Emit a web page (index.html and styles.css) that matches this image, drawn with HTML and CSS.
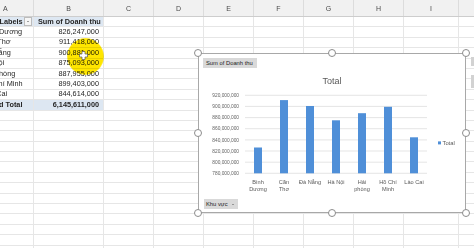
FILE: index.html
```html
<!DOCTYPE html>
<html lang="vi">
<head>
    <meta charset="UTF-8">
    <meta name="viewport" content="width=device-width, initial-scale=1.0">
    <title>Doanh thu theo khu vực - PivotChart</title>
    <link rel="stylesheet" href="styles.css">
</head>
<body>
    <div class="sheet">
        <table class="grid">
            <colgroup>
                <col class="col-a"><col class="col-b"><col class="col-n"><col class="col-n"><col class="col-n">
                <col class="col-n"><col class="col-n"><col class="col-n"><col class="col-i"><col class="col-j">
            </colgroup>
            <thead>
                <tr><th>A</th><th>B</th><th>C</th><th>D</th><th>E</th><th>F</th><th>G</th><th>H</th><th>I</th><th></th></tr>
            </thead>
            <tbody>
                <tr class="pv">
                    <td class="a"><div class="lbl">Row Labels<span class="filter"></span></div></td>
                    <td class="b num">Sum of Doanh thu</td>
                    <td></td><td></td><td></td><td></td><td></td><td></td><td></td><td></td>
                </tr>
                <tr><td class="a">Bình Dương</td><td class="b num">826,247,000</td><td></td><td></td><td></td><td></td><td></td><td></td><td></td><td></td></tr>
                <tr><td class="a">Cần Thơ</td><td class="b num">911,418,000</td><td></td><td></td><td></td><td></td><td></td><td></td><td></td><td></td></tr>
                <tr><td class="a">Đà Nẵng</td><td class="b num">900,881,000</td><td></td><td></td><td></td><td></td><td></td><td></td><td></td><td></td></tr>
                <tr><td class="a">Hà Nội</td><td class="b num">875,093,000</td><td></td><td></td><td></td><td></td><td></td><td></td><td></td><td></td></tr>
                <tr><td class="a">Hải phòng</td><td class="b num">887,955,000</td><td></td><td></td><td></td><td></td><td></td><td></td><td></td><td></td></tr>
                <tr><td class="a">Hồ Chí Minh</td><td class="b num">899,403,000</td><td></td><td></td><td></td><td></td><td></td><td></td><td></td><td></td></tr>
                <tr><td class="a">Lào Cai</td><td class="b num">844,614,000</td><td></td><td></td><td></td><td></td><td></td><td></td><td></td><td></td></tr>
                <tr class="pv"><td class="a">Grand Total</td><td class="b num">6,145,611,000</td><td></td><td></td><td></td><td></td><td></td><td></td><td></td><td></td></tr>
                <tr><td></td><td></td><td></td><td></td><td></td><td></td><td></td><td></td><td></td><td></td></tr>
                <tr><td></td><td></td><td></td><td></td><td></td><td></td><td></td><td></td><td></td><td></td></tr>
                <tr><td></td><td></td><td></td><td></td><td></td><td></td><td></td><td></td><td></td><td></td></tr>
                <tr><td></td><td></td><td></td><td></td><td></td><td></td><td></td><td></td><td></td><td></td></tr>
                <tr><td></td><td></td><td></td><td></td><td></td><td></td><td></td><td></td><td></td><td></td></tr>
                <tr><td></td><td></td><td></td><td></td><td></td><td></td><td></td><td></td><td></td><td></td></tr>
                <tr><td></td><td></td><td></td><td></td><td></td><td></td><td></td><td></td><td></td><td></td></tr>
                <tr><td></td><td></td><td></td><td></td><td></td><td></td><td></td><td></td><td></td><td></td></tr>
                <tr><td></td><td></td><td></td><td></td><td></td><td></td><td></td><td></td><td></td><td></td></tr>
                <tr><td></td><td></td><td></td><td></td><td></td><td></td><td></td><td></td><td></td><td></td></tr>
                <tr><td></td><td></td><td></td><td></td><td></td><td></td><td></td><td></td><td></td><td></td></tr>
                <tr><td></td><td></td><td></td><td></td><td></td><td></td><td></td><td></td><td></td><td></td></tr>
                <tr><td></td><td></td><td></td><td></td><td></td><td></td><td></td><td></td><td></td><td></td></tr>
                <tr><td></td><td></td><td></td><td></td><td></td><td></td><td></td><td></td><td></td><td></td></tr>
            </tbody>
        </table>
    </div>

    <!-- cursor highlight over the pivot values -->
    <div class="spotlight"></div>
    <svg class="cursor" width="9" height="9" viewBox="0 0 9 9">
        <path d="M3 0.5h3v2.5h2.5v3h-2.5v2.5h-3v-2.5h-2.5v-3h2.5z" fill="#fff" stroke="#555" stroke-width="0.7"/>
    </svg>

    <!-- floating pivot chart -->
    <div class="chart">
        <svg class="plot" width="268" height="160" viewBox="0 0 268 160">
            <text class="title" x="134" y="31" text-anchor="middle">Total</text>
            <g class="gridlines">
                <line x1="47" x2="229" y1="42.3" y2="42.3"/>
                <line x1="47" x2="229" y1="53.4" y2="53.4"/>
                <line x1="47" x2="229" y1="64.6" y2="64.6"/>
                <line x1="47" x2="229" y1="75.7" y2="75.7"/>
                <line x1="47" x2="229" y1="86.9" y2="86.9"/>
                <line x1="47" x2="229" y1="98.0" y2="98.0"/>
                <line x1="47" x2="229" y1="109.2" y2="109.2"/>
                <line x1="47" x2="229" y1="120.3" y2="120.3"/>
            </g>
            <g class="ylabels" text-anchor="end">
                <text x="41" y="44">920,000,000</text>
                <text x="41" y="55.1">900,000,000</text>
                <text x="41" y="66.3">880,000,000</text>
                <text x="41" y="77.4">860,000,000</text>
                <text x="41" y="88.6">840,000,000</text>
                <text x="41" y="99.7">820,000,000</text>
                <text x="41" y="110.9">800,000,000</text>
                <text x="41" y="122">780,000,000</text>
            </g>
            <g class="bars">
                <rect x="56" y="94.5" width="8" height="25.8"/>
                <rect x="82" y="47.1" width="8" height="73.2"/>
                <rect x="108" y="53" width="8" height="67.3"/>
                <rect x="134" y="67.3" width="8" height="53"/>
                <rect x="160" y="60.2" width="8" height="60.1"/>
                <rect x="186" y="53.8" width="8" height="66.5"/>
                <rect x="212" y="84.3" width="8" height="36"/>
            </g>
            <g class="xlabels" text-anchor="middle">
                <text x="60" y="130.7">Bình</text><text x="60" y="138.3">Dương</text>
                <text x="86" y="130.7">Cần</text><text x="86" y="138.3">Thơ</text>
                <text x="112" y="130.7">Đà Nẵng</text>
                <text x="138" y="130.7">Hà Nội</text>
                <text x="164" y="130.7">Hải</text><text x="164" y="138.3">phòng</text>
                <text x="190" y="130.7">Hồ Chí</text><text x="190" y="138.3">Minh</text>
                <text x="216" y="130.7">Lào Cai</text>
            </g>
            <g class="legend">
                <rect x="240" y="88.4" width="3" height="3"/>
                <text x="244.5" y="91.8">Total</text>
            </g>
        </svg>

        <div class="field-btn field-top">Sum of Doanh thu</div>
        <div class="field-btn field-bottom">Khu vực <span class="caret"></span></div>

        <span class="handle tl"></span><span class="handle tm"></span><span class="handle tr"></span>
        <span class="handle ml"></span><span class="handle mr"></span>
        <span class="handle bl"></span><span class="handle bm"></span><span class="handle br"></span>
    </div>

    <div class="chart-tools">
        <span class="tool t1"></span>
        <span class="tool t2"></span>
    </div>
</body>
</html>
```

FILE: styles.css
```css
body { margin: 0; width: 474px; height: 248px; overflow: hidden; position: relative; background: #fff; font-family: "Liberation Sans", Arial, sans-serif; }
.sheet { margin-left: -23px; }
.grid { border-collapse: collapse; table-layout: fixed; width: 521px; }
.grid col.col-a { width: 56px; }
.grid col.col-b { width: 70px; }
.grid col.col-n { width: 50px; }
.grid col.col-i { width: 55px; }
.grid col.col-j { width: 40px; }
.grid th { height: 16px; padding: 0; background: #f1f1f1; border-right: 1px solid #dcdcdc; border-bottom: 1px solid #cdcdcd; font-size: 7px; font-weight: normal; color: #4a4a4a; }
.grid tbody tr { height: 10.4px; }
.grid td { padding: 0 3px 0 4px; border: 1px solid #e6e6e6; font-size: 7.3px; line-height: 8px; color: #262626; white-space: nowrap; overflow: hidden; }
.grid td.num { text-align: right; padding-right: 4px; }
.grid tr.pv td.a, .grid tr.pv td.b { background: #dde7f2; font-weight: bold; }
.lbl { display: flex; justify-content: space-between; align-items: center; }
.filter { width: 6px; height: 7px; margin-right: -2px; border: 1px solid #bcbcbc; background: #f6f6f6; position: relative; }
.filter::after { content: ""; position: absolute; left: 1.5px; top: 3px; border-left: 1.5px solid transparent; border-right: 1.5px solid transparent; border-top: 1.5px solid #444; }

.spotlight { position: absolute; left: 67px; top: 38px; width: 37px; height: 37px; border-radius: 50%; background: radial-gradient(circle, #ffe600 66%, rgba(255,230,0,0.6) 72%, rgba(255,230,0,0) 74%); mix-blend-mode: multiply; }
.cursor { position: absolute; left: 79px; top: 51px; }

.chart { position: absolute; left: 198px; top: 53px; width: 268px; height: 160px; box-sizing: border-box; border: 1px solid #a8a8a8; background: #fff; }
.plot { position: absolute; left: -1px; top: -1px; }
.plot .title { font-size: 9px; fill: #595959; }
.plot .gridlines line { stroke: #dadada; stroke-width: 0.7; }
.plot .ylabels text { font-size: 4.8px; fill: #636363; }
.plot .xlabels text { font-size: 5.6px; fill: #595959; }
.plot .bars rect { fill: #4f8fd8; }
.plot .legend rect { fill: #4f8fd8; }
.plot .legend text { font-size: 5.8px; fill: #595959; }
.field-btn { position: absolute; background: #d9d9d9; color: #222; font-size: 5.8px; line-height: 10px; height: 10px; padding: 0 3px; box-sizing: border-box; white-space: nowrap; }
.field-top { left: 4px; top: 4px; width: 54px; }
.field-bottom { left: 5px; top: 145px; width: 34px; display: flex; align-items: center; gap: 4px; padding: 0 2px; }
.caret { border-left: 1.5px solid transparent; border-right: 1.5px solid transparent; border-top: 1.5px solid #555; }
.handle { position: absolute; width: 6px; height: 6px; border: 1px solid #8c8c8c; border-radius: 50%; background: #fff; }
.handle.tl { left: -5px; top: -5px; }
.handle.tm { left: 129px; top: -5px; }
.handle.tr { right: -5px; top: -5px; }
.handle.ml { left: -5px; top: 75px; }
.handle.mr { right: -5px; top: 75px; }
.handle.bl { left: -5px; bottom: -5px; }
.handle.bm { left: 129px; bottom: -5px; }
.handle.br { right: -5px; bottom: -5px; }

.chart-tools { position: absolute; left: 471px; top: 57px; display: flex; flex-direction: column; gap: 9px; }
.tool { display: block; width: 6px; background: #d2d2d2; }
.tool.t1 { height: 9px; }
.tool.t2 { height: 13px; }
```
